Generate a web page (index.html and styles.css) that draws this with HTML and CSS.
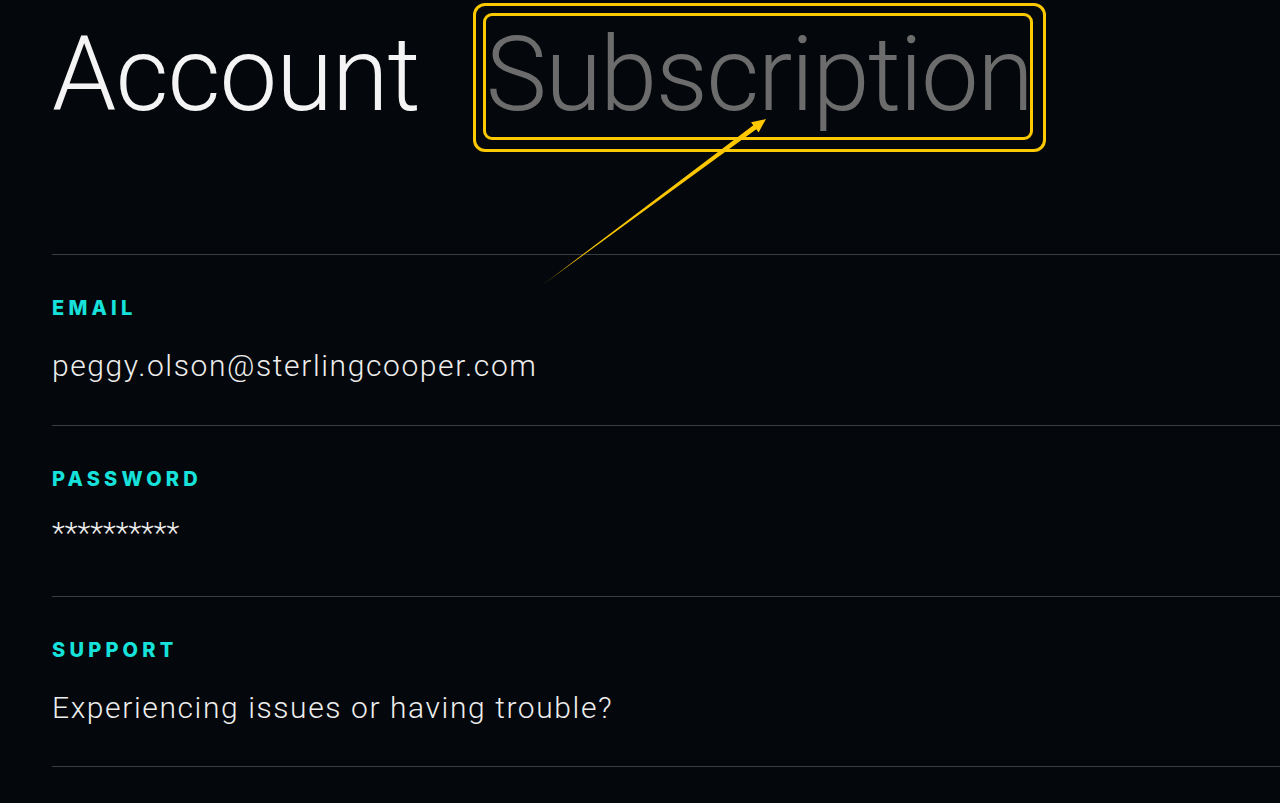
FILE: index.html
```html
<!DOCTYPE html>
<html lang="en">
<head>
<meta charset="utf-8">
<title>Account</title>
<link rel="stylesheet" href="styles.css">
</head>
<body>
<div class="page">
  <header class="tabs">
    <h1 class="tab tab-active">Account</h1>
    <div class="tab tab-inactive">Subscription</div>
  </header>
  <section class="rows">
    <div class="row">
      <div class="label">EMAIL</div>
      <div class="value">peggy.olson@sterlingcooper.com</div>
    </div>
    <div class="row">
      <div class="label">PASSWORD</div>
      <div class="value value-pw">**********</div>
    </div>
    <div class="row">
      <div class="label">SUPPORT</div>
      <div class="value">Experiencing issues or having trouble?</div>
    </div>
  </section>

  <div class="note-outer"></div>
  <div class="note-inner"></div>
  <svg class="note-arrow" width="1280" height="803" viewBox="0 0 1280 803" aria-hidden="true">
    <defs>
      <linearGradient id="fade" x1="541" y1="286" x2="766" y2="119" gradientUnits="userSpaceOnUse">
        <stop offset="0" stop-color="#f7c400" stop-opacity="0.4"/>
        <stop offset="0.15" stop-color="#f7c400"/>
        <stop offset="1" stop-color="#ffc800"/>
      </linearGradient>
    </defs>
    <polygon fill="url(#fade)" points="541,286 756.3,129.3 758.6,132.4 766,119 751.0,122.3 753.3,125.3"/>
  </svg>
</div>
</body>
</html>
```

FILE: styles.css
```css
html, body {
  margin: 0;
  padding: 0;
  background: #04070b;
}

body {
  font-family: Roboto, "Liberation Sans", sans-serif;
  color: #efefef;
}

.page {
  position: relative;
  width: 1280px;
  height: 803px;
  overflow: hidden;
  padding-left: 52px;
  box-sizing: border-box;
}

.tabs {
  display: flex;
  align-items: baseline;
  gap: 66px;
  padding-top: 23px;
  height: 254px;
  box-sizing: border-box;
}

.tab {
  margin: 0;
  font-size: 103px;
  line-height: 1;
  font-weight: 300;
}

.tab-active {
  color: #f4f4f4;
  letter-spacing: -1px;
}

.tab-inactive {
  color: #6c6c6c;
  letter-spacing: -1.6px;
}

.rows {
  display: flex;
  flex-direction: column;
}

.row {
  border-top: 1.5px solid #3a3d42;
  height: 171px;
  box-sizing: border-box;
  padding-top: 42px;
  display: flex;
  flex-direction: column;
  gap: 30px;
}

.row:last-child {
  border-bottom: 1.5px solid #3a3d42;
}

.label {
  font-family: Inter, "Liberation Sans", sans-serif;
  font-weight: 800;
  font-size: 20px;
  line-height: 22px;
  letter-spacing: 4.2px;
  color: #16e2db;
}

.value {
  font-size: 30px;
  line-height: 34px;
  font-weight: 300;
  letter-spacing: 1.6px;
  color: #ededed;
}

.value-pw {
  letter-spacing: 0;
  margin-top: -4px;
}

.note-outer {
  position: absolute;
  left: 473px;
  top: 3px;
  width: 573px;
  height: 149px;
  box-sizing: border-box;
  border: 3px solid #fcc800;
  border-radius: 12px;
}

.note-inner {
  position: absolute;
  left: 483px;
  top: 13px;
  width: 550px;
  height: 127px;
  box-sizing: border-box;
  border: 3px solid #fcc800;
  border-radius: 9px;
}

.note-arrow {
  position: absolute;
  left: 0;
  top: 0;
  pointer-events: none;
}
```
